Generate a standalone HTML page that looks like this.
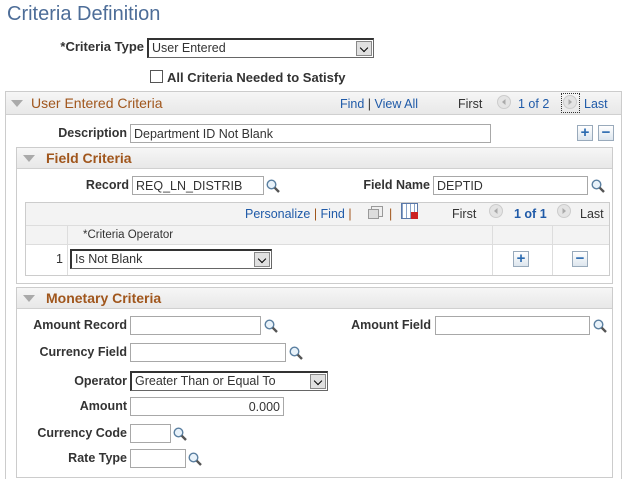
<!DOCTYPE html>
<html style="overflow:hidden;width:626px;height:479px"><head><style>
*{margin:0;padding:0;box-sizing:border-box}
body{width:626px;height:479px;background:#fff;font-family:"Liberation Sans",Arial,sans-serif;font-size:12.5px;color:#333;position:relative;overflow:hidden}
.a{position:absolute;white-space:nowrap}
.lbl{position:absolute;font-weight:bold;color:#333;text-align:right;white-space:nowrap}
.in{position:absolute;border:1px solid #a8a8a8;background:#fff;height:19px;padding:1px 3px;line-height:16px;color:#333}
.sel{position:absolute;border:1px solid #666;border-top:2px solid #333;border-left:2px solid #333;background:#fff;height:20px;padding:1px 3px;line-height:15px}
.sel .dd{position:absolute;right:1px;top:1px;width:16px;height:15px;background:#e0e0e0;border:1px solid #888}
.sel .dd:after{content:"";position:absolute;left:4px;top:3px;width:5px;height:5px;border-right:1.5px solid #000;border-bottom:1.5px solid #000;transform:rotate(45deg)}
.box{position:absolute;border:1px solid #ccc}
.hdr{position:absolute;background:linear-gradient(#f6f6f6,#e8e8e8);border-bottom:1px solid #d0d0d0}
.tri{position:absolute;width:0;height:0;border-left:6px solid transparent;border-right:6px solid transparent;border-top:7px solid #aaa}
.or{color:#a0561c}
.bl{color:#1f5aa8}
.lens{position:absolute;width:14px;height:14px}
.btn{position:absolute;width:16px;height:16px;border:1px solid #9ab;background:linear-gradient(#fff,#dde6ee);color:#2c6bb0;font-weight:bold;font-size:15px;line-height:13px;text-align:center}
.circ{position:absolute;width:14px;height:14px}
</style></head><body>
<svg width="0" height="0" style="position:absolute"><defs>
<symbol id="l" viewBox="0 0 14 14"><circle cx="5.5" cy="5.5" r="4.3" fill="#e8f2fa" stroke="#5a7fa0" stroke-width="1.4"/><line x1="8.7" y1="8.7" x2="13" y2="13" stroke="#555" stroke-width="2.4"/></symbol>
<symbol id="p" viewBox="0 0 14 14"><circle cx="7" cy="7" r="6.5" fill="#e4e4e4" stroke="#ccc"/><path d="M8.5 4 L5 7 L8.5 10Z" fill="#aaa"/></symbol>
<symbol id="n" viewBox="0 0 14 14"><circle cx="7" cy="7" r="6.5" fill="#e4e4e4" stroke="#ccc"/><path d="M5.5 4 L9 7 L5.5 10Z" fill="#aaa"/></symbol>
</defs></svg>

<div class="a" style="left:7px;top:3px;font-size:20px;color:#4d6d98">Criteria Definition</div>
<div class="lbl" style="right:482px;top:39px;font-size:13px">*Criteria Type</div>
<div class="sel" style="left:147px;top:38px;width:227px">User Entered<span class="dd"></span></div>
<div class="a" style="left:150px;top:70px;width:13px;height:13px;border:1px solid #555"></div>
<div class="a" style="left:167px;top:70px;font-weight:bold;font-size:13px">All Criteria Needed to Satisfy</div>

<div class="box" style="left:5px;top:91px;width:617px;height:400px"></div>
<div class="hdr" style="left:6px;top:92px;width:615px;height:23px"></div>
<div class="tri" style="left:11px;top:100px"></div>
<div class="a or" style="left:31px;top:95px;font-size:14px">User Entered Criteria</div>
<div class="a" style="left:340px;top:97px"><span class="bl">Find</span> | <span class="bl">View All</span></div>
<div class="a" style="left:458px;top:97px">First</div>
<svg class="circ" style="left:497px;top:95px"><use href="#p"/></svg>
<div class="a bl" style="left:518px;top:97px">1 of 2</div>
<div class="a" style="left:561px;top:93px;width:19px;height:20px;border:1px dotted #333"></div>
<svg class="circ" style="left:563px;top:95px"><use href="#n"/></svg>
<div class="a bl" style="left:584px;top:97px">Last</div>

<div class="lbl" style="right:499px;top:126px">Description</div>
<div class="in" style="left:130px;top:124px;width:361px">Department ID Not Blank</div>
<div class="btn" style="left:577px;top:125px">+</div>
<div class="btn" style="left:598px;top:125px">−</div>

<div class="box" style="left:16px;top:147px;width:597px;height:137px"></div>
<div class="hdr" style="left:17px;top:148px;width:595px;height:21px"></div>
<div class="tri" style="left:23px;top:155px"></div>
<div class="a or" style="left:46px;top:150px;font-size:14px;font-weight:bold">Field Criteria</div>
<div class="lbl" style="right:497px;top:178px">Record</div>
<div class="in" style="left:132px;top:176px;width:132px">REQ_LN_DISTRIB</div>
<svg class="lens" style="left:266px;top:179px"><use href="#l"/></svg>
<div class="lbl" style="right:196px;top:178px">Field Name</div>
<div class="in" style="left:433px;top:176px;width:155px">DEPTID</div>
<svg class="lens" style="left:591px;top:179px"><use href="#l"/></svg>

<div class="box" style="left:25px;top:202px;width:585px;height:74px;background:#fff"></div>
<div class="a" style="left:26px;top:203px;width:583px;height:23px;background:#f3f3f3;border-bottom:1px solid #ddd"></div>
<div class="a" style="left:245px;top:207px"><span class="bl">Personalize</span> <span class="or">|</span> <span class="bl">Find</span> <span class="or">|</span></div>
<div class="a" style="left:371px;top:206px;width:12px;height:11px;border:1px solid #999;background:#eee"></div>
<div class="a" style="left:368px;top:209px;width:11px;height:10px;border:1px solid #999;background:#ddd"></div>
<div class="a or" style="left:389px;top:207px">|</div>
<div class="a" style="left:401px;top:203px;width:17px;height:16px;background:repeating-linear-gradient(90deg,#8aa4c8 0 1px,#fff 1px 4px),#fff;border:1px solid #5a78a8"></div>
<div class="a" style="left:411px;top:212px;width:7px;height:7px;background:#c22"></div>
<div class="a" style="left:452px;top:207px">First</div>
<svg class="circ" style="left:489px;top:204px"><use href="#p"/></svg>
<div class="a bl" style="left:514px;top:207px;font-weight:bold">1 of 1</div>
<svg class="circ" style="left:557px;top:204px"><use href="#n"/></svg>
<div class="a" style="left:580px;top:207px">Last</div>
<div class="a" style="left:26px;top:226px;width:583px;height:19px;background:#f3f3f3;border-bottom:1px solid #ddd"></div>
<div class="a" style="left:67px;top:226px;width:1px;height:49px;background:#ddd"></div>
<div class="a" style="left:492px;top:226px;width:1px;height:49px;background:#ddd"></div>
<div class="a" style="left:552px;top:226px;width:1px;height:49px;background:#ddd"></div>
<div class="a" style="left:83px;top:229px;font-size:11.5px">*Criteria Operator</div>
<div class="a" style="left:56px;top:252px">1</div>
<div class="sel" style="left:70px;top:249px;width:202px">Is Not Blank<span class="dd"></span></div>
<div class="btn" style="left:513px;top:251px">+</div>
<div class="btn" style="left:572px;top:251px">−</div>

<div class="box" style="left:16px;top:287px;width:597px;height:191px"></div>
<div class="hdr" style="left:17px;top:288px;width:595px;height:21px"></div>
<div class="tri" style="left:23px;top:295px"></div>
<div class="a or" style="left:46px;top:290px;font-size:14px;font-weight:bold">Monetary Criteria</div>

<div class="lbl" style="right:499px;top:318px">Amount Record</div>
<div class="in" style="left:130px;top:316px;width:131px"></div>
<svg class="lens" style="left:264px;top:319px"><use href="#l"/></svg>
<div class="lbl" style="right:195px;top:318px">Amount Field</div>
<div class="in" style="left:435px;top:316px;width:155px"></div>
<svg class="lens" style="left:593px;top:319px"><use href="#l"/></svg>
<div class="lbl" style="right:499px;top:345px">Currency Field</div>
<div class="in" style="left:130px;top:343px;width:156px"></div>
<svg class="lens" style="left:289px;top:346px"><use href="#l"/></svg>
<div class="lbl" style="right:499px;top:374px">Operator</div>
<div class="sel" style="left:130px;top:371px;width:198px">Greater Than or Equal To<span class="dd"></span></div>
<div class="lbl" style="right:499px;top:399px">Amount</div>
<div class="in" style="left:130px;top:397px;width:154px;text-align:right">0.000</div>
<div class="lbl" style="right:499px;top:426px">Currency Code</div>
<div class="in" style="left:130px;top:424px;width:41px"></div>
<svg class="lens" style="left:173px;top:427px"><use href="#l"/></svg>
<div class="lbl" style="right:499px;top:451px">Rate Type</div>
<div class="in" style="left:130px;top:449px;width:56px"></div>
<svg class="lens" style="left:188px;top:452px"><use href="#l"/></svg>
</body></html>
